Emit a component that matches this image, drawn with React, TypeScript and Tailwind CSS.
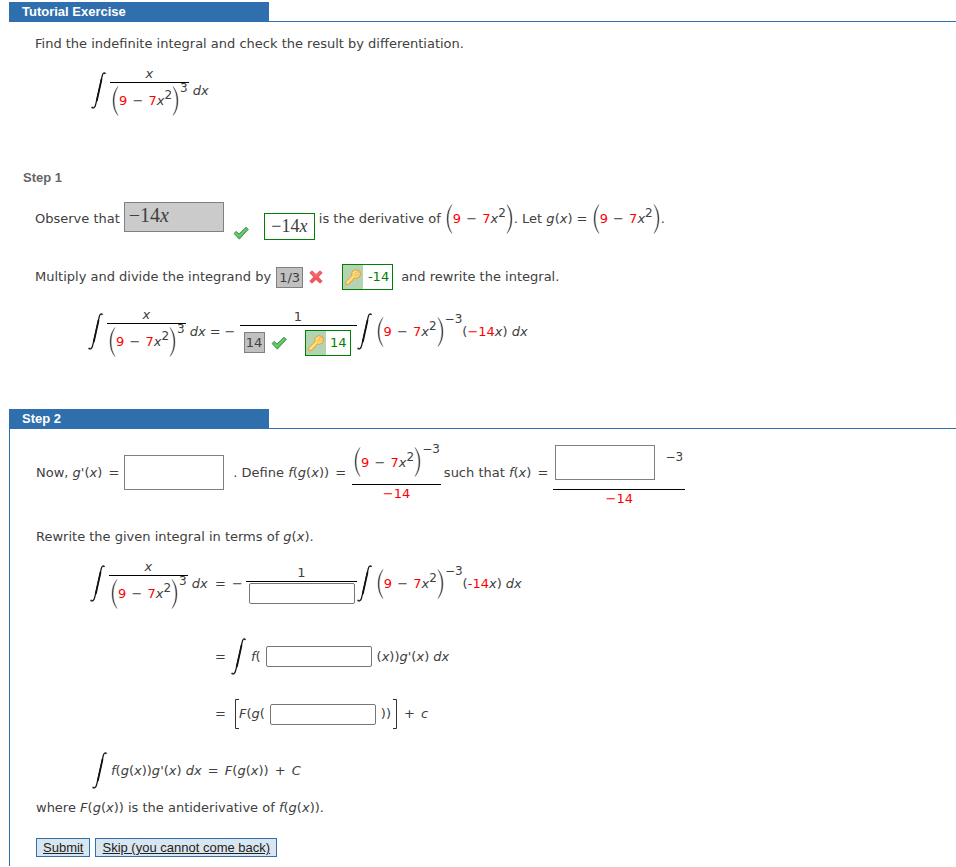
import { ReactNode } from "react";

const Integral = () => {
    return (
        <svg viewBox="0 0 15 37" className="h-[37px] w-[15px] shrink-0" aria-label="integral">
            <path d="M14.500 1.700C13.500 0.300 12 0.600 11.300 3.500L4.800 32C4 35.600 2.500 36.600 0.600 35.500" fill="none" stroke="#111" strokeWidth="1.200" />
            <path d="M10.600 7L5.800 29" stroke="#111" strokeWidth="1.700" />
            <circle cx="13.900" cy="1.600" r="0.700" fill="#222" />
            <circle cx="1.200" cy="35.300" r="0.700" fill="#222" />
        </svg>
    );
};

const Paren = ({ right = false }) => {
    return (
        <svg viewBox="0 0 8 30" className="h-[30px] w-2 shrink-0" aria-hidden="true">
            <path
                d={right ? "M1 0.500Q6 6 6 15Q6 24 1 29.500Q4.900 23 4.900 15Q4.900 7 1 0.500Z" : "M7 0.500Q2 6 2 15Q2 24 7 29.500Q3.100 23 3.100 15Q3.100 7 7 0.500Z"}
                fill="#333"
                stroke="#555"
                strokeWidth="0.400"
            />
        </svg>
    );
};

const Bracket = ({ right = false }) => {
    return (
        <svg viewBox="0 0 4 30" className="h-[30px] w-1 shrink-0" aria-hidden="true">
            <path d={right ? "M0 0.500H3.500V29.500H0" : "M4 0.500H0.500V29.500H4"} fill="none" stroke="#333" />
        </svg>
    );
};

const Check = () => {
    return (
        <svg viewBox="0 0 16 14" className="h-[14px] w-4 shrink-0" aria-label="correct">
            <path d="M1 7.500L3.300 5.300L6 8L13 1.200L15.400 3.300L6.300 13.200Z" fill="#5cb860" stroke="#3f9a48" strokeWidth="0.900" strokeLinejoin="round" />
            <path d="M2.500 7.200L6 10.300L13.500 2.800" fill="none" stroke="#8fd48f" strokeWidth="0.900" />
        </svg>
    );
};

const Cross = () => {
    return (
        <svg viewBox="0 0 14 14" className="h-[14px] w-[14px] shrink-0" aria-label="incorrect">
            <path
                d="M3 0.800L7 4.500L11 0.800L13.300 2.800L9.300 7L13.300 11.200L11 13.200L7 9.500L3 13.200L0.700 11.200L4.700 7L0.700 2.800Z"
                fill="#f0565b"
                stroke="#e2474d"
                strokeWidth="0.700"
                strokeLinejoin="round"
            />
            <path d="M2.500 2.300L7 6.500L11.500 2.300" fill="none" stroke="#f98d8d" strokeWidth="0.800" />
        </svg>
    );
};

const KeyIcon = () => {
    return (
        <svg viewBox="0 0 16 16" className="h-4 w-4" aria-label="answer key">
            <path
                d="M7.800 2.200L11 0.500L14.500 1.800L15.600 5L14.400 8.200L11 9.500L9.300 9L7.800 10.600L7.500 12.200L5.800 12.500L5.300 14.200L3.200 15.500L0.700 15.400L0.500 13L6.600 7L6.700 4Z"
                fill="#fbd265"
                stroke="#e0a03a"
                strokeWidth="0.900"
                strokeLinejoin="round"
            />
            <path d="M1.800 14.200L8.300 7.800M8.300 4L11 2.200" stroke="#fff0b5" strokeWidth="1" />
            <circle cx="12.200" cy="4.200" r="1.200" fill="#fff" stroke="#c98a30" strokeWidth="0.600" />
        </svg>
    );
};

const Red = ({ children }: { children: ReactNode }) => <span className="text-[#ff0000]">{children}</span>;

const Op = ({ children }: { children: ReactNode }) => <span className="px-0.5">{children}</span>;

// (9 − 7x²) with an optional outer exponent
const Group = ({ exp = "" }) => {
    return (
        <span className="flex items-center">
            <Paren />
            <span className="whitespace-pre">
                <Red>9</Red> <span className="px-px">−</span> <Red>7</Red><i>x</i><sup className="-top-1.5 text-xs leading-none">2</sup>
            </span>
            <Paren right />
            {exp && <span className="-mt-1 self-start text-xs leading-3">{exp}</span>}
        </span>
    );
};

const Fraction = ({ top, children }: { top: ReactNode; children: ReactNode }) => {
    return (
        <span className="flex flex-col items-stretch">
            <span className="flex justify-center border-b border-black leading-[17px]">{top}</span>
            <span className="flex justify-center">{children}</span>
        </span>
    );
};

const Integrand = () => {
    return (
        <span className="flex items-center gap-1">
            <Integral />
            <Fraction top={<i>x</i>}>
                <span className="px-px pt-[3px]"><Group exp="3" /></span>
            </Fraction>
            <i>dx</i>
        </span>
    );
};

const Given = ({ value, className = "" }: { value: string; className?: string }) => {
    return (
        <input readOnly aria-label="Your answer" value={value} className={`h-[21px] border border-[#808080] bg-[#c0c0c0] text-center ${className}`} />
    );
};

const KeyAnswer = ({ value, className = "" }: { value: string; className?: string }) => {
    return (
        <span className={`flex h-[26px] border border-[#008000] text-[#008000] ${className}`}>
            <span className="flex w-5 items-center justify-center bg-[#b3d3b3]"><KeyIcon /></span>
            <span className="flex-1 pr-[3px] text-right leading-6">{value}</span>
        </span>
    );
};

const Blank = ({ label }: { label: string }) => {
    return <input aria-label={label} className="h-[21px] w-[106px] rounded-[2px] border border-[#767676] bg-white px-1" />;
};

const MathBlank = ({ label }: { label: string }) => {
    return <input aria-label={label} className="h-[35px] w-[100px] border border-[#808080] bg-white px-1" />;
};

const Heading = ({ title }: { title: string }) => {
    return (
        <div className="border-b border-[#2f6fad]">
            <h2 className="h-[19px] w-[260px] bg-[#2f6fad] pl-[13px] font-['Liberation_Sans',sans-serif] text-[13px] leading-[19px] font-bold text-white">{title}</h2>
        </div>
    );
};

const App = () => {
    return (
        <main className="bg-white pt-[2px] pl-[9px] font-['DejaVu_Sans',sans-serif] text-[13px] leading-5 text-[#404040]">
            <section>
                <Heading title="Tutorial Exercise" />
                <div className="pl-[26px]">
                    <p className="mt-3">Find the indefinite integral and check the result by differentiation.</p>
                    <div className="mt-[11px] flex pl-14"><Integrand /></div>
                </div>
            </section>

            <section>
                <h2 className="mt-[52px] pl-[14px] font-['Liberation_Sans',sans-serif] text-[13px] font-bold text-[#666]">Step 1</h2>
                <div className="pl-[26px]">
                    <div className="mt-[14px] flex items-start gap-1 leading-[34px]">
                        <span>Observe that</span>
                        <span className="h-[30px] w-[100px] border border-[#808080] bg-[#cbcbcb] pl-1 font-['Liberation_Serif',serif] text-xl leading-6">
                            −14<i>x</i>
                        </span>
                        <span className="flex h-[38px] items-end gap-[15px] pl-[5px]">
                            <Check />
                            <span className="h-[27px] w-[51px] border border-[#008000] text-center font-['Liberation_Serif',serif] text-lg leading-[25px]">
                                −14<i>x</i>
                            </span>
                        </span>
                        <span>is the derivative of</span>
                        <span className="flex items-center"><Group />. Let&nbsp;<i>g</i>(<i>x</i>)&nbsp;=&nbsp;<Group />.</span>
                    </div>
                    <div className="mt-6 flex items-center">
                        <span className="pr-[5px]">Multiply and divide the integrand by</span>
                        <Given value="1/3" className="w-[27px]" />
                        <span className="pr-[19px] pl-1.5"><Cross /></span>
                        <KeyAnswer value="-14" className="w-[51px]" />
                        <span className="pl-2">and rewrite the integral.</span>
                    </div>
                    <div className="mt-4 flex items-center pl-[53px]">
                        <Integrand />
                        <span className="flex gap-1 px-1"><span>=</span><span>−</span></span>
                        <Fraction top="1">
                            <span className="flex items-center pt-1 pr-1.5 pl-1">
                                <Given value="14" className="w-[21px]" />
                                <span className="pr-[18px] pl-1.5"><Check /></span>
                                <KeyAnswer value="14" className="w-[46px]" />
                            </span>
                        </Fraction>
                        <Integral />
                        <span className="pl-1"><Group exp="−3" /></span>
                        <span>(<Red>−14</Red><i>x</i>) <i>dx</i></span>
                    </div>
                </div>
            </section>

            <section className="mt-[52px]">
                <Heading title="Step 2" />
                <div className="border-l border-[#2f6fad] pt-[9px] pb-[9px] pl-[26px]">
                    <div className="flex items-center">
                        <span className="pr-[3px]">Now, <i>g</i>'(<i>x</i>) <Op>=</Op></span>
                        <MathBlank label="g'(x)" />
                        <span className="pr-1 pl-[9px]">. Define <i>f</i>(<i>g</i>(<i>x</i>)) <Op>=</Op></span>
                        <Fraction top={<span className="px-px pt-1 pb-[7px]"><Group exp="−3" /></span>}>
                            <span className="leading-[17px]"><Red>−14</Red></span>
                        </Fraction>
                        <span className="px-[3px]">such that <i>f</i>(<i>x</i>) <Op>=</Op></span>
                        <Fraction
                            top={
                                <span className="flex px-[2px] pt-[7px] pb-[9px]">
                                    <MathBlank label="f(x)" />
                                    <span className="pt-1 pl-2.5 text-xs">−3</span>
                                </span>
                            }
                        >
                            <span className="leading-[17px]"><Red>−14</Red></span>
                        </Fraction>
                    </div>

                    <p className="mt-5">Rewrite the given integral in terms of <i>g</i>(<i>x</i>).</p>
                    <div className="mt-[11px] flex items-center pl-[54px]">
                        <span className="w-[125px]"><Integrand /></span>
                        <span className="flex gap-1.5 pr-[3px]"><span>=</span><span>−</span></span>
                        <Fraction top="1">
                            <span className="flex pt-px pr-[2px] pl-[3px]"><Blank label="denominator" /></span>
                        </Fraction>
                        <Integral />
                        <span className="pl-1"><Group exp="−3" /></span>
                        <span>(<Red>-14</Red><i>x</i>) <i>dx</i></span>
                    </div>
                    <div className="mt-[29px] flex items-center gap-[5px] pl-[179px]">
                        <span>=</span>
                        <Integral />
                        <span><i>f</i>(</span>
                        <Blank label="f argument" />
                        <span>(<i>x</i>))<i>g</i>'(<i>x</i>) <i>dx</i></span>
                    </div>
                    <div className="mt-6 flex items-center pl-[179px]">
                        <span className="pr-[9px]">=</span>
                        <Bracket />
                        <span className="pr-[5px]"><i>F</i>(<i>g</i>(</span>
                        <Blank label="F argument" />
                        <span className="pr-0.5 pl-[5px]">))</span>
                        <Bracket right />
                        <span className="pl-[5px]"><Op>+</Op> <i>c</i></span>
                    </div>
                    <div className="mt-[23px] flex items-center gap-1 pl-14">
                        <Integral />
                        <span><i>f</i>(<i>g</i>(<i>x</i>))<i>g</i>'(<i>x</i>) <i>dx</i> <Op>=</Op> <i>F</i>(<i>g</i>(<i>x</i>)) <Op>+</Op> <i>C</i></span>
                    </div>
                    <p className="mt-[9px]">where <i>F</i>(<i>g</i>(<i>x</i>)) is the antiderivative of <i>f</i>(<i>g</i>(<i>x</i>)).</p>

                    <div className="mt-5 flex gap-[5px] font-['Liberation_Sans',sans-serif] text-[13px] leading-[17px] text-[#222]">
                        <button className="border border-[#2f6fad] bg-[#dae6ef] px-1.5 underline">Submit</button>
                        <button className="border border-[#2f6fad] bg-[#dae6ef] px-1.5 underline">Skip (you cannot come back)</button>
                    </div>
                </div>
            </section>
        </main>
    );
};

export default App;
